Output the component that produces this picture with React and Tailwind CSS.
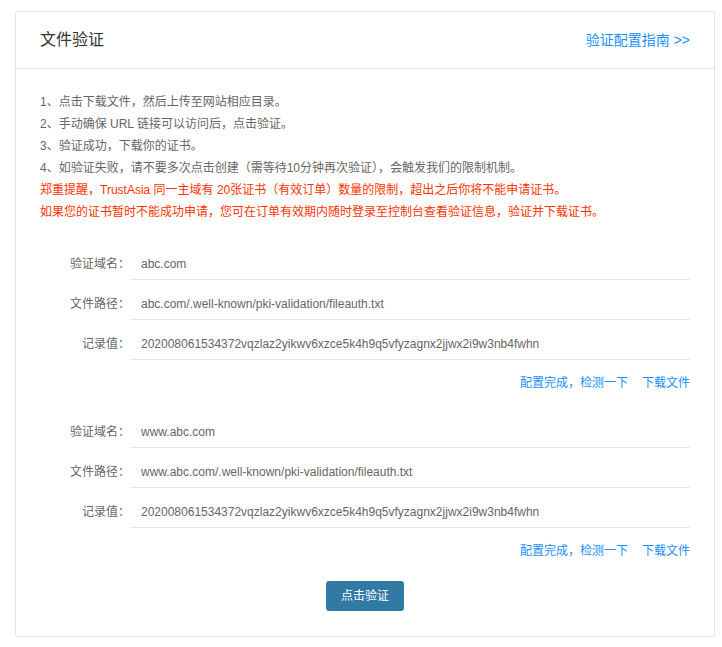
import React from 'react';

const font = { fontFamily: '"Liberation Sans", "Noto Sans CJK SC", sans-serif' };

const records = [
  {
    domain: 'abc.com',
    path: 'abc.com/.well-known/pki-validation/fileauth.txt',
    value: '202008061534372vqzlaz2yikwv6xzce5k4h9q5vfyzagnx2jjwx2i9w3nb4fwhn',
  },
  {
    domain: 'www.abc.com',
    path: 'www.abc.com/.well-known/pki-validation/fileauth.txt',
    value: '202008061534372vqzlaz2yikwv6xzce5k4h9q5vfyzagnx2jjwx2i9w3nb4fwhn',
  },
];

function Row({ label, value }) {
  return (
    <div className="flex mb-[10px]">
      <div className="w-[90px] text-right h-[30px] leading-[29px] text-[#666]">{label}</div>
      <div className="flex-1 h-[30px] leading-[29px] border-b border-[#e8e8e8] pl-[11px] text-[#666] whitespace-nowrap">
        {value}
      </div>
    </div>
  );
}

function RecordBlock({ rec }) {
  return (
    <div>
      <Row label="验证域名：" value={rec.domain} />
      <Row label="文件路径：" value={rec.path} />
      <Row label="记录值：" value={rec.value} />
      <div className="pt-[1px] h-[26px] flex justify-end gap-[14px] leading-[24px] text-[#1890ff]">
        <a href="#" className="hover:underline">配置完成，检测一下</a>
        <a href="#" className="hover:underline">下载文件</a>
      </div>
    </div>
  );
}

export default function App() {
  return (
    <div className="min-h-screen bg-white pt-[11px] pl-[15px]" style={font}>
      <div className="w-[700px] border border-[#e5e5e5] rounded-[2px]">
        <div className="h-[57px] px-[24px] flex items-center justify-between border-b border-[#e5e5e5]">
          <h2 className="text-[16px] text-[#333]">文件验证</h2>
          <a href="#" className="text-[14px] text-[#1890ff]">验证配置指南 &gt;&gt;</a>
        </div>

        <div className="px-[24px] pt-[22px] pb-[25px] text-[12px]">
          <div className="leading-[22px] text-[#666]">
            <p>1、点击下载文件，然后上传至网站相应目录。</p>
            <p>2、手动确保 URL 链接可以访问后，点击验证。</p>
            <p>3、验证成功，下载你的证书。</p>
            <p>4、如验证失败，请不要多次点击创建（需等待10分钟再次验证），会触发我们的限制机制。</p>
            <p className="text-[#ff3300]">郑重提醒，TrustAsia 同一主域有 20张证书（有效订单）数量的限制，超出之后你将不能申请证书。</p>
            <p className="text-[#ff3300]">如果您的证书暂时不能成功申请，您可在订单有效期内随时登录至控制台查看验证信息，验证并下载证书。</p>
          </div>

          <div className="mt-[27px] flex flex-col gap-[22px]">
            {records.map((r) => (
              <RecordBlock key={r.domain} rec={r} />
            ))}
          </div>

          <div className="mt-[17px] flex justify-center">
            <button className="w-[78px] h-[30px] rounded-[3px] bg-[#327aa6] text-white text-[12px]">
              点击验证
            </button>
          </div>
        </div>
      </div>
    </div>
  );
}
